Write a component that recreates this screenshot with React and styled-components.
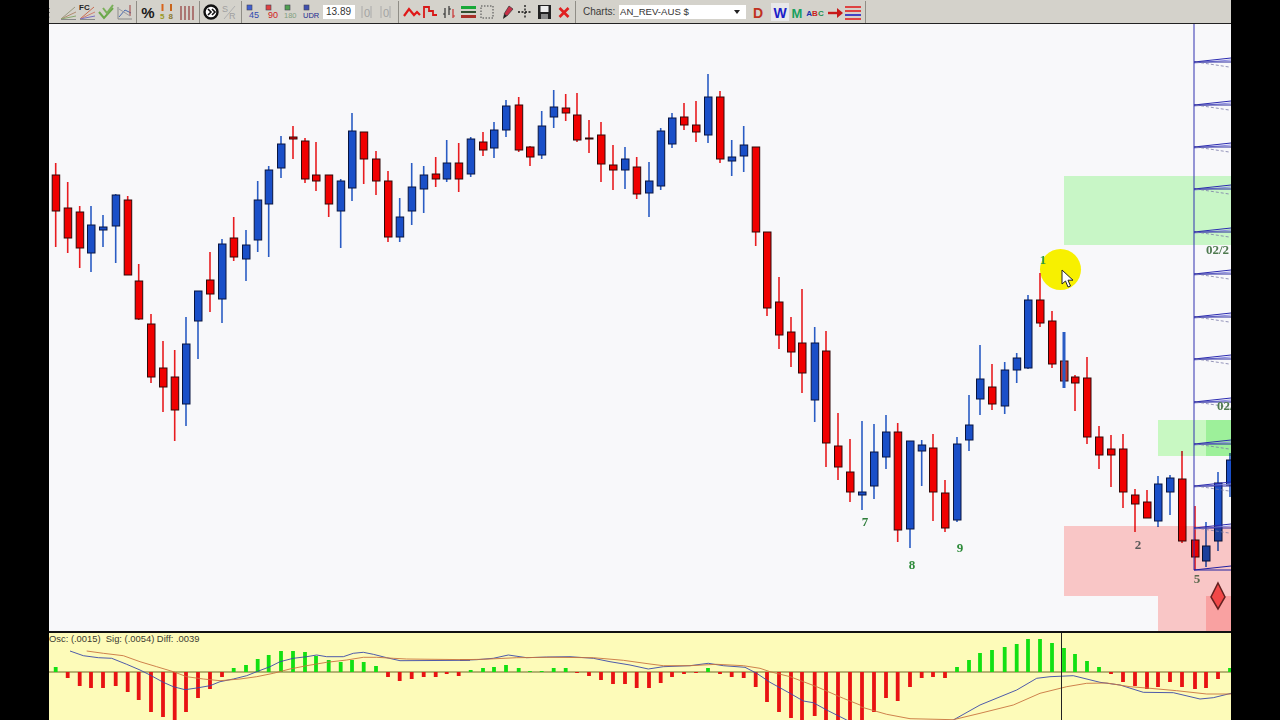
import styled, { createGlobalStyle } from "styled-components";

// x, high, body top, body bottom, low, colour, end of the oscillator bar
const CANDLES = [
  [55.7, 163, 175, 211, 247, "r", 667], [67.7, 182, 208, 238, 253, "r", 678],
  [79.7, 206, 212, 248, 268, "r", 686], [91, 206, 225, 253, 272, "b", 688],
  [103, 215, 227, 230, 247, "b", 688], [115.7, 194, 195, 226, 263, "b", 686],
  [127.7, 196, 200, 275, 275, "r", 692], [138.7, 264, 281, 319, 320, "r", 700],
  [151, 314, 324, 377, 383, "r", 712], [163, 341, 368, 387, 412, "r", 717],
  [174.7, 350, 377, 410, 441, "r", 720], [186, 317, 344, 404, 426, "b", 712],
  [198, 291, 291, 321, 359, "b", 698], [210, 252, 280, 294, 312, "r", 689],
  [222, 239, 244, 299, 323, "b", 677], [233.7, 217, 238, 257, 261, "r", 668],
  [246, 230, 245, 259, 281, "b", 665], [257.7, 181, 200, 240, 252, "b", 659],
  [268.7, 166, 170, 204, 257, "b", 655], [281, 136, 144, 168, 178, "b", 651],
  [293, 126, 137, 139, 159, "r", 651], [305, 138, 141, 179, 183, "r", 652],
  [316, 142, 175, 181, 191, "r", 656], [328.7, 175, 175, 204, 217, "r", 660],
  [340.7, 179, 181, 211, 248, "b", 662], [352, 113, 131, 188, 201, "b", 660],
  [363.7, 132, 132, 159, 184, "r", 662], [376, 151, 159, 181, 195, "r", 666],
  [388, 171, 181, 237, 242, "r", 677], [399.7, 198, 217, 237, 242, "b", 681],
  [411.7, 163, 187, 211, 225, "b", 679], [423.7, 166, 175, 189, 213, "b", 677],
  [435.7, 157, 174, 179, 187, "r", 677], [446.7, 140, 163, 179, 182, "b", 674],
  [458.7, 143, 163, 179, 192, "r", 676], [470.7, 137, 139, 174, 177, "b", 670],
  [483, 132, 142, 150, 156, "r", 668], [494, 122, 130, 148, 158, "b", 667],
  [506, 100, 106, 130, 137, "b", 665], [518.7, 97, 105, 150, 152, "r", 668],
  [530, 146, 147, 157, 166, "r", 671], [541.7, 111, 126, 155, 159, "b", 671],
  [553.7, 90, 107, 117, 128, "b", 668], [565.7, 94, 108, 113, 121, "r", 668],
  [577, 93, 115, 140, 142, "r", 673], [589, 120, 138, 139, 153, "r", 676],
  [601, 122, 135, 164, 182, "r", 680], [613, 145, 165, 170, 190, "r", 684],
  [625, 147, 159, 170, 189, "b", 684], [636.7, 157, 167, 194, 199, "r", 688],
  [649, 162, 181, 193, 217, "b", 688], [660.7, 128, 131, 186, 190, "b", 683],
  [672, 113, 118, 144, 148, "b", 677], [684, 103, 117, 125, 130, "r", 674],
  [696, 101, 125, 132, 142, "r", 673], [708, 74, 97, 135, 143, "b", 668],
  [720, 91, 97, 159, 163, "r", 674], [731.7, 140, 157, 161, 176, "b", 677],
  [743.7, 126, 145, 156, 172, "b", 678], [755.7, 147, 147, 232, 246, "r", 687],
  [767, 232, 232, 308, 316, "r", 702], [779, 277, 302, 335, 349, "r", 712],
  [791, 317, 332, 352, 367, "r", 718], [802, 289, 343, 373, 393, "r", 720],
  [814.7, 327, 343, 400, 422, "b", 716], [826, 331, 351, 443, 467, "r", 720],
  [838, 413, 446, 467, 480, "r", 720], [850, 439, 472, 492, 502, "r", 720],
  [862, 421, 492, 495, 510, "b", 720], [874, 424, 452, 486, 499, "b", 712],
  [886, 415, 432, 457, 469, "b", 698], [897.7, 423, 432, 530, 542, "r", 701],
  [910, 441, 441, 529, 548, "b", 687], [921.7, 440, 445, 451, 486, "b", 678],
  [933, 434, 448, 492, 521, "r", 677], [945, 480, 493, 528, 532, "r", 678],
  [957, 437, 444, 520, 522, "b", 667], [969, 395, 425, 440, 451, "b", 660],
  [980, 345, 379, 399, 415, "b", 653], [992, 364, 387, 404, 410, "r", 650],
  [1004.7, 362, 370, 406, 414, "b", 647], [1016.7, 353, 358, 370, 383, "b", 644],
  [1028, 295, 300, 368, 369, "b", 639], [1040, 273, 300, 323, 327, "r", 639],
  [1052, 311, 321, 364, 368, "r", 643], [1064, 332, 361, 381, 388, "m", 648],
  [1075, 375, 377, 383, 411, "r", 654], [1087, 357, 378, 437, 444, "r", 661],
  [1099, 426, 437, 455, 469, "r", 667], [1111, 435, 449, 455, 487, "r", 674],
  [1123, 434, 449, 492, 508, "r", 682], [1135, 489, 495, 504, 532, "r", 686],
  [1147, 490, 502, 518, 518, "r", 689], [1158, 476, 484, 521, 527, "b", 687],
  [1170, 475, 478, 492, 515, "b", 682], [1182, 451, 479, 541, 543, "r", 687],
  [1195, 506, 540, 557, 570, "r", 689], [1206, 522, 546, 561, 567, "b", 688],
  [1218, 472, 483, 541, 551, "b", 679], [1230, 453, 460, 485, 497, "b", 668],
];

const FAN_ROWS = [62, 105, 147, 189, 232, 274, 317, 359, 402, 444, 486, 528];

const ZONES = [
  { x: 1064, y: 176, w: 167, h: 69, fill: "#c8f6c6" },
  { x: 1158, y: 420, w: 73, h: 36, fill: "#c8f8c2" },
  { x: 1206, y: 420, w: 25, h: 36, fill: "#c8f7ca" },
  { x: 1064, y: 526, w: 167, h: 70, fill: "#f9c6c6" },
  { x: 1158, y: 596, w: 73, h: 35, fill: "#f9c6c6" },
  { x: 1206, y: 596, w: 25, h: 35, fill: "#ffcfcf" },
];

const LABELS = [
  { x: 1043, y: 264, text: "1", fill: "#2f9a3c" },
  { x: 865, y: 526, text: "7", fill: "#2e7d3a" },
  { x: 912, y: 569, text: "8", fill: "#2e8b3a" },
  { x: 960, y: 552, text: "9", fill: "#2e8b3a" },
  { x: 1138, y: 549, text: "2", fill: "#5a5a5a" },
  { x: 1197, y: 583, text: "5", fill: "#5f6a50" },
  { x: 1206, y: 254, text: "02/2", fill: "#4f7a50" },
  { x: 1217, y: 410, text: "02/2", fill: "#4f7a50" },
];

const toPoints = (list, ox, scale = 3, oy = 625) =>
  list.map(([x, y]) => `${(ox + x / scale).toFixed(1)},${(oy + y / scale).toFixed(1)}`).join(" ");

const BLUE_LINE = [
  toPoints([[90, 78], [130, 92], [175, 98], [215, 100], [260, 118], [300, 135], [330, 150], [370, 172], [400, 185], [435, 194], [470, 189], [510, 182], [540, 170], [580, 162], [620, 152], [650, 140], [690, 125], [720, 110], [760, 100], [800, 95], [830, 90], [860, 95], [910, 95], [940, 85], [970, 82], [1000, 88], [1040, 98], [1080, 107], [1290, 106]], 40),
  toPoints([[30, 106], [80, 104], [130, 100], [175, 90], [230, 98], [290, 96], [360, 95], [430, 100], [480, 110], [540, 120], [595, 132], [640, 125], [720, 122], [775, 115], [820, 122], [885, 127], [920, 145], [960, 172], [1020, 205], [1060, 228], [1090, 233], [1130, 255], [1190, 285], [1230, 305]], 450),
  toPoints([[250, 300], [280, 285], [360, 240], [470, 195], [530, 160], [570, 155], [640, 152], [720, 172], [780, 180], [850, 202], [940, 203], [1020, 222], [1060, 218], [1113, 205]], 860),
];

const ORANGE_LINE = [
  toPoints([[140, 78], [190, 85], [250, 92], [300, 110], [350, 125], [400, 140], [440, 155], [490, 162], [540, 167], [600, 162], [650, 155], [700, 145], [750, 132], [800, 122], [860, 112], [920, 105], [970, 97], [1010, 97], [1060, 100], [1100, 102], [1290, 104]], 40),
  toPoints([[30, 104], [100, 103], [200, 98], [300, 97], [430, 98], [520, 106], [600, 117], [640, 122], [720, 122], [800, 118], [880, 122], [930, 130], [960, 140], [1020, 155], [1100, 185], [1180, 220], [1230, 240]], 450),
  toPoints([[0, 245], [80, 268], [150, 281], [280, 284], [360, 265], [460, 240], [540, 205], [620, 185], [680, 175], [740, 174], [810, 185], [870, 190], [950, 197], [1040, 207], [1113, 207]], 860),
];

const GlobalStyle = createGlobalStyle`
  html, body {
    margin: 0;
    background: #000;
    font-family: "Liberation Sans", Arial, sans-serif;
  }
`;

const Frame = styled.div`
  width: 1280px;
  height: 720px;
  background: #000;
  display: flex;
  justify-content: center;
  overflow: hidden;
`;

const Screen = styled.div`
  width: 1182px;
  height: 720px;
  display: flex;
  flex-direction: column;
`;

const Toolbar = styled.div`
  height: 23px;
  flex: none;
  display: flex;
  align-items: center;
  background: #d4d2cb;
  border-bottom: 1px solid #222;
`;

const Slot = styled.div`
  width: ${(p) => p.$w}px;
  height: 18px;
  flex: none;
  display: flex;
  justify-content: ${(p) => (p.$end ? "flex-end" : "center")};
  overflow: hidden;
  background: ${(p) => (p.$active ? "#e8e8ea" : "transparent")};
`;

const Sep = styled.div`
  width: 1px;
  height: 22px;
  flex: none;
  margin: 0 ${(p) => p.$r ?? 1.5}px 0 ${(p) => p.$l ?? 1.5}px;
  background: #8f8d86;
`;

const ValueBox = styled.div`
  width: 32px;
  height: 14px;
  flex: none;
  margin: 0 4px 0 3.5px;
  padding-left: 3px;
  box-sizing: border-box;
  background: #fff;
  color: #333;
  font-size: 10px;
  line-height: 14px;
`;

const ChartsLabel = styled.div`
  width: 36px;
  flex: none;
  margin-left: 6px;
  color: #3a3a3a;
  font-size: 10px;
`;

const Combo = styled.div`
  width: 127px;
  height: 14px;
  flex: none;
  display: flex;
  align-items: center;
  justify-content: space-between;
  padding: 0 2px 0 1px;
  box-sizing: border-box;
  background: #fff;
  color: #333;
  font-size: 9.6px;
`;

const ComboArrow = styled.span`
  width: 0;
  height: 0;
  margin-right: 4px;
  border-left: 3.5px solid transparent;
  border-right: 3.5px solid transparent;
  border-top: 4px solid #222;
`;

const Glyph = styled.text`
  font-family: "Liberation Sans", Arial, sans-serif;
  font-size: ${(p) => p.$size}px;
  font-weight: ${(p) => (p.$bold ? 700 : 400)};
  fill: ${(p) => p.$fill};
`;

const ChartPane = styled.div`
  position: relative;
  flex: 1;
  min-height: 0;
  background: #f8f8fa;
  border-bottom: 2px solid #111;
`;

const ChartSvg = styled.svg`
  position: relative;
  z-index: 1;
  display: block;
  width: 1182px;
  height: 607px;
`;

const Wick = styled.line`
  stroke: ${(p) => (p.$kind === "r" ? "#e81c20" : "#2a5cc4")};
  stroke-width: ${(p) => (p.$kind === "m" ? 3 : 1.6)};
`;

const Body = styled.rect`
  fill: ${(p) => (p.$kind === "b" ? "#1a4fc8" : p.$kind === "m" ? "#c8342a" : "#f00000")};
  stroke: ${(p) => (p.$kind === "b" ? "#081440" : "#300808")};
  stroke-width: 1;
`;

const Zone = styled.rect`
  fill: ${(p) => p.$fill};
  mix-blend-mode: multiply;
`;

const FanLine = styled.line`
  stroke: ${(p) => p.$stroke};
  stroke-width: ${(p) => (p.$dashed ? 0.8 : 1)};
  stroke-dasharray: ${(p) => (p.$dashed ? "3 2" : "none")};
`;

const Label = styled.text`
  font-family: "Liberation Serif", "Times New Roman", serif;
  font-size: 13px;
  font-weight: 700;
  text-anchor: ${(p) => (p.$text.length > 1 ? "start" : "middle")};
  fill: ${(p) => p.$fill};
`;

const Spotlight = styled.div`
  position: absolute;
  left: 991px;
  top: 224.5px;
  width: 41px;
  height: 41px;
  border-radius: 50%;
  background: #f7f000;
`;

const Pointer = styled.svg`
  position: absolute;
  z-index: 2;
  left: 1012px;
  top: 245px;
`;

const OscPane = styled.div`
  position: relative;
  height: 87px;
  flex: none;
  background: #fdfbb9;
`;

const OscText = styled.div`
  position: absolute;
  left: 0;
  top: 0;
  color: #3a3a30;
  font-size: 9.4px;
  line-height: 12px;
  white-space: pre;
`;

const OscSvg = styled.svg`
  display: block;
  width: 1182px;
  height: 87px;
`;

const OscBar = styled.rect`
  fill: ${(p) => (p.$up ? "#12e012" : "#e81212")};
`;

const Ico = ({ children }) => (
  <svg width="18" height="18" viewBox="0 0 18 18" style={{ flex: "none" }}>
    {children}
  </svg>
);

function FanIcon({ colors, tag }) {
  return (
    <Ico>
      {tag && <Glyph x="1" y="7" $size={8} $bold $fill="#222">{tag}</Glyph>}
      <line x1="2" y1="16" x2="16" y2="4" stroke={colors[0]} />
      <line x1="2" y1="16" x2="17" y2="9" stroke={colors[1]} />
      <line x1="2" y1="16" x2="17" y2="13" stroke={colors[2]} />
      <line x1="2" y1="16.5" x2="17" y2="16.5" stroke="#8a8a8a" />
    </Ico>
  );
}

function AngleIcon({ text, fill, box }) {
  return (
    <Ico>
      <rect x="3" y="2" width="5" height="5" fill={box} stroke="#445" strokeWidth="0.6" />
      <Glyph x={text.length > 2 ? 2 : 5} y="15" $size={text.length > 2 ? 7.5 : 9} $fill={fill}>
        {text}
      </Glyph>
    </Ico>
  );
}

function ToggleIcon() {
  return (
    <Ico>
      <line x1="3" y1="3" x2="3" y2="15" stroke="#aaa" />
      <Glyph x="5" y="14" $size={11} $fill="#a2a2a2">0</Glyph>
      <line x1="12" y1="3" x2="12" y2="15" stroke="#aaa" />
    </Ico>
  );
}

function LetterIcon({ children, fill, size = 14 }) {
  return (
    <Ico>
      <Glyph x="9" y="14.5" textAnchor="middle" $size={size} $bold $fill={fill}>
        {children}
      </Glyph>
    </Ico>
  );
}

function Candle({ c }) {
  const [x, high, top, bottom, low, kind] = c;
  return (
    <g>
      <Wick $kind={kind === "m" ? "r" : kind} x1={x} x2={x} y1={high} y2={low} />
      <Body $kind={kind} x={x - 3.5} y={top} width={7.5} height={Math.max(bottom - top, 1)} />
      {kind === "m" && <Wick $kind="m" x1={x} x2={x} y1={high} y2={low} />}
    </g>
  );
}

function Fan({ y }) {
  return (
    <g>
      <FanLine $stroke="#8a8ae0" x1="1194" y1={y + 1} x2="1231" y2={y - 2} />
      <FanLine $stroke="#2a2ab0" x1="1194" y1={y} x2="1231" y2={y - 4} />
      <FanLine $stroke="#2a2aa0" x1="1194" y1={y} x2="1231" y2={y} />
      <FanLine $stroke="#7a7aa8" $dashed x1="1196" y1={y} x2="1229" y2={y + 5} />
    </g>
  );
}

export default function App() {
  return (
    <>
      <GlobalStyle />
      <Frame>
        <Screen>
          <Toolbar>
            <Slot $w={9.5} $end>
              <Ico>
                <g transform="translate(-9 0)">
                  <line x1="10" y1="16" x2="18" y2="9" stroke="#777" />
                  <line x1="10" y1="13" x2="18" y2="5" stroke="#888" />
                  <line x1="10" y1="16" x2="18" y2="14" stroke="#999" />
                </g>
              </Ico>
            </Slot>
            <Slot $w={19}><FanIcon colors={["#9a9a80", "#b08a70", "#8aa870"]} /></Slot>
            <Slot $w={19}><FanIcon tag="FC" colors={["#c86a50", "#d08070", "#7a70c0"]} /></Slot>
            <Slot $w={19}>
              <Ico>
                <polyline points="2,9 7,15 16,5" fill="none" stroke="#6aa84a" strokeWidth="2" />
                <polyline points="6,5 10,10 16,2" fill="none" stroke="#7ab05a" strokeWidth="2" />
              </Ico>
            </Slot>
            <Slot $w={19}>
              <Ico>
                <polyline points="2,4 2,16 16,16" fill="none" stroke="#8a8a8a" />
                <polyline points="3,14 9,7 15,10" fill="none" stroke="#4a6ab0" />
                <line x1="14" y1="2" x2="14" y2="13" stroke="#a04040" />
                <line x1="3" y1="6" x2="14" y2="13" stroke="#9a9aa0" />
              </Ico>
            </Slot>
            <Sep />
            <Slot $w={19}>
              <LetterIcon fill="#1a1a1a" size={15}>%</LetterIcon>
            </Slot>
            <Slot $w={19}>
              <Ico>
                <line x1="4.5" y1="1" x2="4.5" y2="8" stroke="#d8641c" strokeWidth="2" />
                <Glyph x="2" y="16" $size={8} $bold $fill="#9a9a20">5</Glyph>
                <line x1="13" y1="1" x2="13" y2="8" stroke="#c8641c" strokeWidth="2" />
                <Glyph x="10.5" y="16" $size={8} $bold $fill="#8a7a30">8</Glyph>
              </Ico>
            </Slot>
            <Slot $w={21}>
              <Ico>
                <line x1="3" y1="3" x2="3" y2="17" stroke="#903838" strokeWidth="1.2" />
                <line x1="7" y1="3" x2="7" y2="17" stroke="#903838" strokeWidth="1.2" />
                <line x1="11" y1="3" x2="11" y2="17" stroke="#903838" strokeWidth="1.2" />
                <line x1="15" y1="3" x2="15" y2="17" stroke="#903838" strokeWidth="1.2" />
              </Ico>
            </Slot>
            <Sep />
            <Slot $w={18}>
              <Ico>
                <circle cx="9" cy="9" r="6.5" fill="#fff" stroke="#111" strokeWidth="2.4" />
                <polyline points="6,6 9,9 6,12" fill="none" stroke="#111" strokeWidth="1.6" />
                <polyline points="10,6 13,9 10,12" fill="none" stroke="#111" strokeWidth="1.6" />
              </Ico>
            </Slot>
            <Slot $w={18}>
              <Ico>
                <Glyph x="2" y="9" $size={9} $fill="#a0a0a0">S</Glyph>
                <line x1="4" y1="16" x2="15" y2="3" stroke="#b0b0b0" />
                <Glyph x="9" y="16" $size={9} $fill="#a0a0a0">R</Glyph>
              </Ico>
            </Slot>
            <Sep $l={3} $r={3} />
            <Slot $w={17}><AngleIcon text="45" fill="#3048b0" box="#4060d0" /></Slot>
            <Slot $w={20}><AngleIcon text="90" fill="#d02020" box="#e04040" /></Slot>
            <Slot $w={19}><AngleIcon text="180" fill="#7f9f7f" box="#50a050" /></Slot>
            <Slot $w={19}><AngleIcon text="UDR" fill="#202890" box="#4050b0" /></Slot>
            <ValueBox>13.89</ValueBox>
            <Slot $w={18}><ToggleIcon /></Slot>
            <Slot $w={19}><ToggleIcon /></Slot>
            <Sep />
            <Slot $w={23}>
              <Ico>
                <polyline points="1,13 6,6 11,12 14,9 17,12" fill="none" stroke="#e01818" strokeWidth="2.2" />
              </Ico>
            </Slot>
            <Slot $w={14}>
              <Ico>
                <polyline points="3,15 3,4 8,4 8,8 12,8 12,12 16,12" fill="none" stroke="#d81818" strokeWidth="1.8" />
              </Ico>
            </Slot>
            <Slot $w={24}>
              <Ico>
                <line x1="5" y1="5" x2="5" y2="15" stroke="#333" strokeWidth="1.2" />
                <line x1="3" y1="11" x2="5" y2="11" stroke="#333" />
                <line x1="9" y1="3" x2="9" y2="12" stroke="#333" strokeWidth="1.2" />
                <line x1="9" y1="6" x2="11" y2="6" stroke="#333" />
                <line x1="13" y1="6" x2="13" y2="15" stroke="#c83030" strokeWidth="1.2" />
                <line x1="13" y1="13" x2="15" y2="13" stroke="#c83030" />
              </Ico>
            </Slot>
            <Slot $w={15}>
              <Ico>
                <line x1="1" y1="4.5" x2="17" y2="4.5" stroke="#18a838" strokeWidth="3" />
                <line x1="1" y1="9" x2="17" y2="9" stroke="#305030" strokeWidth="2" />
                <line x1="1" y1="13.5" x2="17" y2="13.5" stroke="#a83028" strokeWidth="3" />
              </Ico>
            </Slot>
            <Slot $w={21}>
              <Ico>
                <rect x="3" y="3" width="12" height="12" fill="none" stroke="#444" strokeDasharray="1.5 1.5" />
              </Ico>
            </Slot>
            <Slot $w={19}>
              <Ico>
                <polygon points="11,3 15,6 9,13 6,11" fill="#c83048" stroke="#333" strokeWidth="0.7" />
                <polygon points="6,11 9,13 5,16" fill="#222" />
              </Ico>
            </Slot>
            <Slot $w={18}>
              <Ico>
                <line x1="9" y1="2" x2="9" y2="16" stroke="#111" strokeDasharray="2 1.5" strokeWidth="1.3" />
                <line x1="2" y1="9" x2="16" y2="9" stroke="#111" strokeDasharray="2 1.5" strokeWidth="1.3" />
              </Ico>
            </Slot>
            <Slot $w={20}>
              <Ico>
                <rect x="3" y="2" width="13" height="14" fill="#222" />
                <rect x="5.5" y="3" width="8" height="6" fill="#eee" />
                <rect x="6" y="11" width="7" height="5" fill="#888" />
              </Ico>
            </Slot>
            <Slot $w={19}>
              <Ico>
                <line x1="4.5" y1="5" x2="13.5" y2="14" stroke="#e02020" strokeWidth="2.6" />
                <line x1="13.5" y1="5" x2="4.5" y2="14" stroke="#e02020" strokeWidth="2.6" />
              </Ico>
            </Slot>
            <Sep />
            <ChartsLabel>Charts:</ChartsLabel>
            <Combo>
              AN_REV-AUS $
              <ComboArrow />
            </Combo>
            <Slot $w={24.5}><LetterIcon fill="#c03020">D</LetterIcon></Slot>
            <Slot $w={18.5} $active><LetterIcon fill="#1a20c8">W</LetterIcon></Slot>
            <Slot $w={16}><LetterIcon fill="#18a060" size={13}>M</LetterIcon></Slot>
            <Slot $w={20}>
              <Ico>
                <Glyph x="9" y="13" textAnchor="middle" $size={8} $bold $fill="#2030b0">
                  A<tspan fill="#c82020">B</tspan><tspan fill="#209050">C</tspan>
                </Glyph>
              </Ico>
            </Slot>
            <Slot $w={20}>
              <Ico>
                <line x1="2" y1="10" x2="13" y2="10" stroke="#c81818" strokeWidth="2.4" />
                <polygon points="11,5 17,10 11,15" fill="#c81818" />
              </Ico>
            </Slot>
            <Slot $w={16}>
              <Ico>
                <line x1="1" y1="4" x2="17" y2="4" stroke="#e02020" strokeWidth="1.6" />
                <line x1="1" y1="8" x2="17" y2="8" stroke="#e02020" strokeWidth="1.6" />
                <line x1="1" y1="12" x2="17" y2="12" stroke="#2020c0" strokeWidth="1.6" />
                <line x1="1" y1="16" x2="17" y2="16" stroke="#e02020" strokeWidth="1.6" />
              </Ico>
            </Slot>
            <Sep $l={3.5} />
          </Toolbar>

          <ChartPane>
            <Spotlight />
            <ChartSvg viewBox="49 24 1182 607">
              {CANDLES.map((c) => (
                <Candle key={c[0]} c={c} />
              ))}
              {ZONES.map((z) => (
                <Zone key={`${z.x}-${z.y}`} x={z.x} y={z.y} width={z.w} height={z.h} $fill={z.fill} />
              ))}
              {FAN_ROWS.map((y) => (
                <Fan key={y} y={y} />
              ))}
              <FanLine $stroke="#3030b0" x1="1194" y1="24" x2="1194" y2="570" />
              <FanLine $stroke="#2020a0" x1="1194" y1="570" x2="1231" y2="570" />
              <FanLine $stroke="#2020a0" x1="1194" y1="570" x2="1231" y2="566" />
              <polygon points="1218,583 1225,597 1218,609 1211,597" fill="#f24848" stroke="#642020" strokeWidth="1.5" />
              {LABELS.map((l) => (
                <Label key={`${l.x}-${l.y}`} x={l.x} y={l.y} $text={l.text} $fill={l.fill}>
                  {l.text}
                </Label>
              ))}
            </ChartSvg>
            <Pointer width="14" height="20" viewBox="0 0 14 20">
              <polygon points="1,1 1,15 4.5,12 7,18 9.5,17 7,11.2 12,11.2" fill="#fff" stroke="#222" strokeWidth="1" />
            </Pointer>
          </ChartPane>

          <OscPane>
            <OscText>{"Osc: (.0015)  Sig: (.0054) Diff: .0039"}</OscText>
            <OscSvg viewBox="49 633 1182 87">
              <line x1="49" x2="1231" y1="672" y2="672" stroke="#6f6b2a" strokeWidth="1.2" />
              {CANDLES.map(([x, , , , , , end]) => (
                <OscBar
                  key={x}
                  $up={end < 672}
                  x={x - 1.9}
                  y={Math.min(end, 672)}
                  width={3.8}
                  height={Math.abs(end - 672)}
                />
              ))}
              {BLUE_LINE.map((pts) => (
                <polyline key={pts} points={pts} fill="none" stroke="#3a48a8" strokeWidth="0.9" />
              ))}
              {ORANGE_LINE.map((pts) => (
                <polyline key={pts} points={pts} fill="none" stroke="#c87440" strokeWidth="0.9" />
              ))}
              <line x1="1061.5" x2="1061.5" y1="633" y2="720" stroke="#222" />
            </OscSvg>
          </OscPane>
        </Screen>
      </Frame>
    </>
  );
}
